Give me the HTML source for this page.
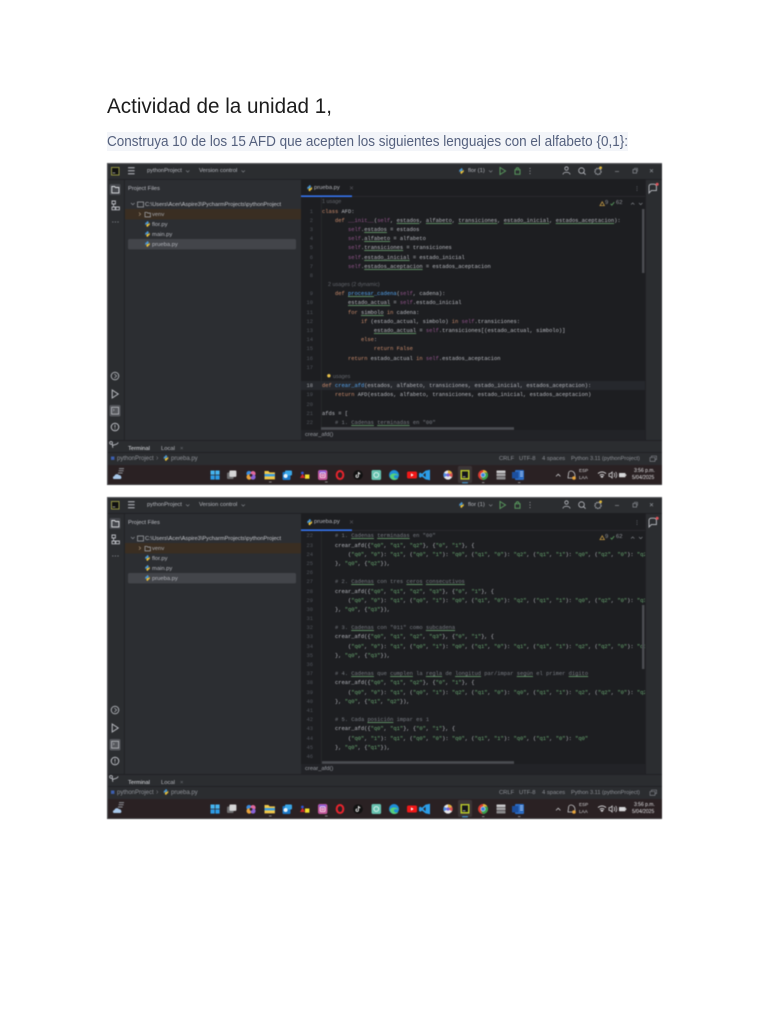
<!DOCTYPE html>
<html lang="es"><head><meta charset="utf-8"><title>Actividad de la unidad 1</title>
<style>
html,body{margin:0;padding:0;background:#fff;width:768px;height:1024px;overflow:hidden}
body{position:relative;font-family:"Liberation Sans",sans-serif}
.s{position:absolute;left:107px;width:555px;height:322px;overflow:hidden;background:#2b2d30;filter:blur(.5px)}
.s>svg{position:absolute;left:0;top:0}
.t{position:absolute;white-space:pre;line-height:8px;height:8px;font-size:5.8px;color:#b4b6bc}
.d{color:#8e9197}
.code{position:absolute;left:194px;top:34.4px;width:344px;height:232.6px;overflow:hidden;font-family:"Liberation Mono",monospace;font-size:5.417px;color:#bcbec4}
.l{position:relative;height:9.2px;line-height:9.2px;padding-left:21px;white-space:pre}
.l i{position:absolute;left:0;width:12px;text-align:right;font-style:normal;color:#4f535a}
.cur{background:#26282d}.cur i{color:#a0a3a9}
b{font-weight:normal;color:#cf8e6d}s{text-decoration:none;color:#56a8f5}em{font-style:normal;color:#94558d}
q{quotes:none;color:#6aab73}small{font-size:inherit;color:#7a7e85}kbd{font:inherit;color:#62656b;font-family:"Liberation Sans",sans-serif}
u{text-decoration-color:#5d8a62;text-underline-offset:1px}
</style></head><body>
<svg width="768" height="160" style="position:absolute;left:0;top:0;filter:blur(.3px)" xmlns="http://www.w3.org/2000/svg">
<rect x="107" y="132" width="521" height="19" fill="#f3f5f9"/>
<text x="107" y="113" font-family="Liberation Sans" font-size="21.5" fill="#1c1c1c" textLength="225" lengthAdjust="spacingAndGlyphs">Actividad de la unidad 1,</text>
<text x="107" y="146" font-family="Liberation Sans" font-size="14.5" fill="#55617e" textLength="521" lengthAdjust="spacingAndGlyphs">Construya 10 de los 15 AFD que acepten los siguientes lenguajes con el alfabeto {0,1}:</text>
</svg>

<svg width="0" height="0" style="position:absolute" xmlns="http://www.w3.org/2000/svg"><defs>
<symbol id="py" viewBox="0 0 8 8" overflow="visible"><path d="M1 3.8C1 2 2 2 3 2V.8C3 .2 5 .2 5.3.8V3.2C5.3 4 4.6 4.2 4 4.2H2.6C2 4.2 2 5 2 5.6 1.2 5.6 1 4.8 1 3.8Z" fill="#4b9ad8"/><path d="M7 4.2C7 6 6 6 5 6V7.2C5 7.8 3 7.8 2.7 7.2V5C2.7 4.4 3.4 4.2 4 4.2H5.4C6 4.2 6 3 6 2.4 6.8 2.4 7 3.2 7 4.2Z" fill="#f0c63c"/></symbol>
<symbol id="chrome" viewBox="0 0 555 322">
<rect width="555" height="322" fill="#2b2d30"/>
<rect x="194" y="16" width="344" height="261" fill="#1d1e21"/>
<rect x="17" y="16" width="177" height="261" fill="#2c2e32"/>
<rect y="16" width="555" height=".8" fill="#1e1f22"/>
<rect x="17" y="16" width=".8" height="261" fill="#1f2023"/>
<rect x="194" y="33" width="344" height=".8" fill="#2b2d30"/>
<rect x="214" y="34" width=".7" height="233" fill="#2b2d30"/>
<rect x="194" y="32.4" width="51" height="1.6" fill="#3574f0"/>
<rect x="194" y="267" width="344" height="10" fill="#222327"/>
<rect x="538" y="16" width=".8" height="261" fill="#1e1f22"/>
<rect y="277" width="555" height=".8" fill="#1e1f22"/>
<rect y="289" width="555" height=".8" fill="#1e1f22"/>
<rect x="0" y="302" width="555" height="20" fill="#2a2123"/>
<rect x="0" y="0" width="555" height="1" fill="#55575b"/>
<rect x="0" y="0" width="1" height="322" fill="#4a4c50"/>
<rect x="0" y="321" width="555" height="1" fill="#3c3a3c"/>
<!-- project rows -->
<rect x="18" y="46" width="176" height="10.4" fill="#3a2e22"/>
<rect x="21" y="76" width="168" height="10.4" rx="1.5" fill="#43454a"/>
<!-- tree icons -->
<path d="M24 40l1.8 1.8L27.6 40" fill="none" stroke="#8b8e94" stroke-width=".7"/>
<rect x="30.5" y="39" width="6" height="5" fill="none" stroke="#a8abb0" stroke-width=".7"/>
<path d="M32 49.5l1.6 1.6L32 52.7" fill="none" stroke="#a08b70" stroke-width=".7"/>
<path d="M38 49.3h2l.8.8h2.6v3.8H38Z" fill="none" stroke="#a8abb0" stroke-width=".7"/>
<use href="#py" x="37.5" y="58" width="6" height="6"/>
<use href="#py" x="37.5" y="68" width="6" height="6"/>
<use href="#py" x="37.5" y="78" width="6" height="6"/>
<use href="#py" x="199.5" y="22" width="6.4" height="6.4"/>
<path d="M243 23.4l3 3m0-3l-3 3" stroke="#55575c" stroke-width=".6"/>
<!-- top bar -->
<rect x="4" y="4" width="8.5" height="8.5" fill="#8f9040"/><rect x="5" y="5" width="6.5" height="6.5" fill="#111"/><rect x="5.6" y="9.6" width="2.6" height=".7" fill="#ccc"/>
<path d="M21 4.8h6.6M21 7.8h6.6M21 10.8h6.6" stroke="#bcbec4" stroke-width="1"/>
<path d="M79 7.4l1.7 1.7 1.7-1.7M134.5 7.4l1.7 1.7 1.7-1.7M382 7.4l1.7 1.7 1.7-1.7" fill="none" stroke="#8b8e94" stroke-width=".6"/>
<use href="#py" x="351.5" y="5" width="6" height="6"/>
<path d="M393 4.5l5.5 3.5-5.5 3.5Z" fill="none" stroke="#57965c" stroke-width="1"/>
<path d="M408 6.8h5v4.4h-5ZM409 6.6c0-2.4 3-2.4 3 0" fill="none" stroke="#57965c" stroke-width="1"/>
<path d="M423 5v.8M423 7.6v.8M423 10.2v.8" stroke="#bcbec4" stroke-width=".9"/>
<circle cx="459.5" cy="5.5" r="1.7" fill="none" stroke="#bcbec4" stroke-width=".8"/><path d="M456 11.5c0-3 7-3 7 0" fill="none" stroke="#bcbec4" stroke-width=".8"/>
<circle cx="474.5" cy="7.6" r="2.8" fill="none" stroke="#bcbec4" stroke-width=".8"/><path d="M476.6 9.7l2 2" stroke="#bcbec4" stroke-width=".8"/>
<circle cx="491" cy="8.4" r="3" fill="none" stroke="#a4a7ad" stroke-width="1.3" stroke-dasharray="1.4 .6"/><circle cx="493.6" cy="4.8" r="1.4" fill="#e0b83a"/>
<path d="M508 8.5h4" stroke="#8b8e94" stroke-width=".7"/>
<rect x="526" y="6.5" width="3.6" height="3.6" fill="none" stroke="#8b8e94" stroke-width=".7"/><path d="M527.4 6.2V5.2h3.2v3.2h-1" fill="none" stroke="#8b8e94" stroke-width=".5"/>
<path d="M543 6.2l3 3m0-3l-3 3" stroke="#8b8e94" stroke-width=".7"/>
<!-- left stripe -->
<rect x="2.5" y="21" width="11" height="11" rx="1.6" fill="#46484d"/>
<path d="M4.8 23.5h2.8l.9 1h3.4v5.4H4.8Z" fill="none" stroke="#dfe1e5" stroke-width=".9"/>
<path d="M5 38h3.4v3H5ZM5 44h3.2v2.8H5ZM8.8 44h3.6v2.8H8.8ZM6.6 41v3" fill="none" stroke="#bcbec4" stroke-width=".9"/>
<path d="M5.2 59h1.2M7.8 59H9M10.4 59h1.2" stroke="#7b7e84" stroke-width=".9"/>
<circle cx="8" cy="213" r="3.8" fill="none" stroke="#a8abb0" stroke-width="1"/><path d="M7.4 211l2.2 2-2.2 2" fill="none" stroke="#a8abb0" stroke-width=".8"/>
<path d="M5.2 227l6 4-6 4Z" fill="none" stroke="#bcbec4" stroke-width="1"/>
<rect x="2.5" y="242" width="11" height="11.5" rx="1.6" fill="#55575c"/>
<rect x="4.6" y="244.3" width="7" height="6.8" fill="none" stroke="#c4c6cb" stroke-width=".7"/><path d="M6 246l1.3 1-1.3 1" fill="none" stroke="#c4c6cb" stroke-width=".5"/>
<circle cx="8" cy="264" r="3.8" fill="none" stroke="#bcbec4" stroke-width="1"/><path d="M8 261.8v2.8M8 265.4v.8" stroke="#bcbec4" stroke-width=".8"/>
<path d="M4 278.5a1.4 1.4 0 1 0 .1 0M5.2 280.4l.6 4.4M11 279.4c0 2.4-3.4 2-5.2 3" fill="none" stroke="#bcbec4" stroke-width=".9"/>
<!-- right of editor -->
<path d="M530 23.4v.7M530 25.2v.7M530 27v.7" stroke="#7b7e84" stroke-width=".8"/>
<path d="M542 30v-6.5c0-1.6 1.2-2.3 2.6-2.3h2.2c1.4 0 2.6 .7 2.6 2.3V27.6H544.3Z" fill="none" stroke="#bcbec4" stroke-width=".9"/><circle cx="550.2" cy="21.2" r="1.5" fill="#e0535a"/>
<!-- inspection widget -->
<path d="M493 42.6l2.2-3.8 2.2 3.8Z" fill="none" stroke="#c49a45" stroke-width=".8"/>
<path d="M503.6 40.8l1.2 1.4 2.4-3" fill="none" stroke="#57965c" stroke-width=".9"/>
<path d="M524 41.6l1.7-1.7 1.7 1.7M532 40l1.7 1.7 1.7-1.7" fill="none" stroke="#8b8e94" stroke-width=".6"/>
<!-- status -->
<rect x="4" y="293.5" width="3.4" height="3.4" fill="#3c5fb0"/>
<use href="#py" x="56" y="292" width="6" height="6"/>
<path d="M49.5 293.4l1.4 1.6-1.4 1.6" fill="none" stroke="#8b8e94" stroke-width=".5"/>
<path d="M543 294.5h5v3.8h-5ZM544.5 294.4V293h5v3.6h-1.4" fill="none" stroke="#8b8e94" stroke-width=".6"/>
<!-- taskbar -->
<path d="M7 316c-1.4 0-1.6-2.6 .4-3 .4-2 3.6-2.6 4.6-.8 2.2-.6 3.6 3.8 1 3.8Z" fill="#a9c8ea"/><path d="M12 305.6h5M11.6 307.8h5M11 310h4.6" stroke="#8d9096" stroke-width="1"/>
<g>
<rect x="103.5" y="307.5" width="4.2" height="4.2" fill="#45b4f0"/><rect x="108.4" y="307.5" width="4.2" height="4.2" fill="#45b4f0"/><rect x="103.5" y="312.4" width="4.2" height="4.2" fill="#2c9be6"/><rect x="108.4" y="312.4" width="4.2" height="4.2" fill="#2c9be6"/>
<rect x="120" y="309.5" width="6.6" height="6.5" rx="1" fill="#6e6e70"/><rect x="122.4" y="307.5" width="7" height="6.4" rx="1" fill="#d5d5d6"/>
<circle cx="142" cy="310.5" r="2.6" fill="#3a8de0"/><circle cx="146" cy="310.6" r="2.6" fill="#e46a9c"/><circle cx="142.2" cy="314" r="2.7" fill="#e9a33c"/><circle cx="146" cy="314" r="2.6" fill="#8a63d8"/><circle cx="144" cy="312.3" r="1.4" fill="#2a2123"/>
<path d="M157.5 308h4l1 1.4h5.4v7H157.5Z" fill="#f2c94a"/><rect x="157.5" y="311" width="10.4" height="2.4" fill="#3a9be0"/>
<rect x="175.5" y="309" width="8" height="8" rx="1" fill="#1a78c8"/><rect x="178" y="307.5" width="7" height="5" rx="1" fill="#3aa7e8"/><circle cx="178.6" cy="313" r="2" fill="#eaf4fb"/>
<path d="M193 315l2.6-4.5 2.4 4.5Z" fill="#d62a2a"/><circle cx="195.4" cy="310" r="1.4" fill="#2c56d8"/><rect x="198" y="311.5" width="4.4" height="4.2" fill="#f5e02c"/>
<rect x="211" y="307" width="9.4" height="10" rx="2" fill="#c5589c"/><rect x="212" y="307.6" width="7" height="3" fill="#8a5ad8"/><rect x="213.2" y="309.6" width="5" height="5" rx="1.2" fill="none" stroke="#fbe8ef" stroke-width=".8"/><circle cx="215.7" cy="312" r="1" fill="none" stroke="#fbe8ef" stroke-width=".6"/>
<ellipse cx="233" cy="312" rx="3.3" ry="4" fill="none" stroke="#e8242d" stroke-width="2"/>
<circle cx="251" cy="312" r="4.8" fill="#111"/><path d="M251.4 309v4.2a1.2 1.2 0 1 1-1.2-1.2M251.4 309.2c.4 1 1 1.5 2 1.6" fill="none" stroke="#eee" stroke-width=".9"/>
<rect x="264.5" y="307" width="9.6" height="10" rx="1.6" fill="#67c2b0"/><circle cx="269.3" cy="312" r="2.4" fill="none" stroke="#d8f2ec" stroke-width="1"/>
<circle cx="287" cy="312" r="5" fill="#1f8fd8"/><path d="M283 313.5c0-3.2 6-4.4 8.6-.6-1-.8-5-1.6-4.6 1 .2 1.6 2.4 2 4.4 1.4-2 2.4-7 2.8-8.4-1.8Z" fill="#57d07a"/>
<rect x="300" y="308.5" width="10" height="7" rx="1.6" fill="#f01818"/><path d="M304 310.4l2.6 1.6-2.6 1.6Z" fill="#fff"/>
<path d="M318.6 307.6l4.4-.8v10.4l-4.4-.8-3.6-2.8-1.6 1.2-1.4-.8v-3.6l1.4-.8 1.6 1.2ZM318.6 309.8l-2.4 2.2 2.4 2.2Z" fill="#2b9de8" fill-rule="evenodd"/>
<circle cx="341" cy="312" r="4.6" fill="#e6e6ea"/><path d="M341 307.4a4.6 4.6 0 0 1 4 2.3l-4 2.3Z" fill="#e8b03a"/><path d="M345 309.7a4.6 4.6 0 0 1 0 4.6l-4-2.3Z" fill="#d9534f"/><path d="M337 314.3a4.6 4.6 0 0 1 0-4.6l4 2.3Z" fill="#4f8fe0"/><circle cx="341" cy="312" r="1.6" fill="#7c5fd8"/>
<rect x="351" y="303" width="14" height="17" rx="1.4" fill="#3b3537"/>
<rect x="353.5" y="307" width="9" height="9.6" fill="#b7c62c"/><rect x="355" y="308.4" width="6" height="6.6" fill="#14151a"/><rect x="355.8" y="313.4" width="2.6" height=".7" fill="#ddd"/><rect x="355" y="319.2" width="6" height="1" rx=".5" fill="#4aa8e8"/>
<circle cx="376" cy="312" r="5" fill="#d93b30"/><path d="M376 307a5 5 0 0 1 4.4 2.6H376Z" fill="#e6b53a"/><path d="M376 317a5 5 0 0 0 4.4-7.4H376l-2 5Z" fill="#37a24e"/><circle cx="376" cy="312" r="2.2" fill="#3b82e0" stroke="#eee" stroke-width=".6"/>
<rect x="389.5" y="307.5" width="9" height="2.6" rx=".6" fill="#c9c9cb"/><rect x="389.5" y="310.6" width="9" height="2.6" fill="#a5a5a7"/><rect x="389.5" y="313.7" width="9" height="2.8" rx=".6" fill="#8b8b8d"/>
<rect x="408" y="307" width="9" height="10" rx="1" fill="#2b6cc4"/><rect x="405" y="309" width="6.4" height="6.4" fill="#1c4f9e"/><path d="M413 309h3M413 311h3M413 313h3" stroke="#cfe2f8" stroke-width=".7"/>
<path d="M162 319h2.6M218 319h2.6M375 319.6h2.4M411 319.6h2.4" stroke="#a4a4a6" stroke-width=".7"/>
<path d="M449 313.4l2.2-2.2 2.2 2.2" fill="none" stroke="#c8c8ca" stroke-width=".8"/>
<path d="M461 315h7v-2.4c0-3-2-4.6-4-4.6-1.4 0-2.4 1-2.4 2.2Z" fill="none" stroke="#c8c8ca" stroke-width=".8"/><circle cx="467" cy="315" r="1.8" fill="#e8a53a"/>
<path d="M491 310.6c2.4-2.2 5.6-2.2 8 0M492.8 312.4c1.4-1.2 3-1.2 4.4 0M495 314.4l-1-.9c.6-.4 1.4-.4 2 0Z" fill="none" stroke="#dadadc" stroke-width=".9"/>
<path d="M502 310.6h1.4l1.8-1.6v6l-1.8-1.6H502ZM507 310c1 1 1 3 0 4M508.6 309c1.6 1.6 1.6 4.4 0 6" fill="none" stroke="#cfcfd1" stroke-width=".8"/>
<rect x="512" y="310" width="6.4" height="4.2" rx=".5" fill="#d8d8da"/><rect x="518.4" y="311.2" width=".9" height="1.8" fill="#d8d8da"/>
</g>
</symbol></defs></svg>

<!-- ============ FIRST SCREENSHOT ============ -->
<div class="s" style="top:163px">
<svg width="555" height="322"><use href="#chrome" width="555" height="322"/></svg>
<span class="t" style="left:40px;top:4px;letter-spacing:-.05px">pythonProject</span>
<span class="t" style="left:92px;top:4px">Version control</span>
<span class="t" style="left:361px;top:4px">flor (1)</span>
<span class="t" style="left:21px;top:22px;color:#bcbec4">Project Files</span>
<span class="t" style="left:38px;top:37.5px;color:#c4c6cb;font-size:5.65px">C:\Users\Acer\Aspire3\PycharmProjects\pythonProject</span>
<span class="t" style="left:45px;top:48px;color:#a8abb0">venv</span>
<span class="t" style="left:45px;top:58px">flor.py</span>
<span class="t" style="left:45px;top:68px">main.py</span>
<span class="t" style="left:45px;top:78px">prueba.py</span>
<span class="t" style="left:207px;top:21px">prueba.py</span>
<span class="t" style="left:498px;top:36px;color:#8e9197">9</span>
<span class="t" style="left:509px;top:36px;color:#8e9197">62</span>
<span class="t" style="left:198px;top:268px;color:#9a9da3">crear_afd()</span>
<span class="t" style="left:21px;top:282px;color:#dfe1e5">Terminal</span>
<span class="t" style="left:54px;top:282px">Local</span>
<span class="t" style="left:73px;top:282px;color:#6f7278">×</span>
<span class="t d" style="left:10px;top:291.5px;font-size:6px">pythonProject</span>
<span class="t d" style="left:64px;top:291.5px;font-size:6px">prueba.py</span>
<span class="t d" style="left:392px;top:291.5px">CRLF</span>
<span class="t d" style="left:412px;top:291.5px">UTF-8</span>
<span class="t d" style="left:435px;top:291.5px">4 spaces</span>
<span class="t d" style="left:464px;top:291.5px;font-size:5.6px">Python 3.11 (pythonProject)</span>
<span class="t" style="left:472px;top:303.5px;font-size:4.6px;color:#d5d5d7">ESP</span>
<span class="t" style="left:472px;top:310.5px;font-size:4.6px;color:#d5d5d7">LAA</span>
<span class="t" style="left:527px;top:303.5px;font-size:5px;color:#e0e0e2">3:56 p.m.</span>
<span class="t" style="left:525px;top:310.5px;font-size:5px;color:#e0e0e2">5/04/2025</span>
<div class="code">
<div class="l"><kbd>1 usage</kbd></div>
<div class="l"><i>1</i><b>class</b> AFD:</div>
<div class="l"><i>2</i>    <b>def</b> <em>__init__</em>(<em>self</em>, <u>estados</u>, <u>alfabeto</u>, <u>transiciones</u>, <u>estado_inicial</u>, <u>estados_aceptacion</u>):</div>
<div class="l"><i>3</i>        <em>self</em>.<u>estados</u> = estados</div>
<div class="l"><i>4</i>        <em>self</em>.<u>alfabeto</u> = alfabeto</div>
<div class="l"><i>5</i>        <em>self</em>.<u>transiciones</u> = transiciones</div>
<div class="l"><i>6</i>        <em>self</em>.<u>estado_inicial</u> = estado_inicial</div>
<div class="l"><i>7</i>        <em>self</em>.<u>estados_aceptacion</u> = estados_aceptacion</div>
<div class="l"><i>8</i></div>
<div class="l"><kbd>    2 usages (2 dynamic)</kbd></div>
<div class="l"><i>9</i>    <b>def</b> <s><u>procesar</u>_cadena</s>(<em>self</em>, cadena):</div>
<div class="l"><i>10</i>        <u>estado_actual</u> = <em>self</em>.estado_inicial</div>
<div class="l"><i>11</i>        <b>for</b> <u>simbolo</u> <b>in</b> cadena:</div>
<div class="l"><i>12</i>            <b>if</b> (estado_actual, simbolo) <b>in</b> <em>self</em>.transiciones:</div>
<div class="l"><i>13</i>                <u>estado_actual</u> = <em>self</em>.transiciones[(estado_actual, simbolo)]</div>
<div class="l"><i>14</i>            <b>else</b>:</div>
<div class="l"><i>15</i>                <b>return False</b></div>
<div class="l"><i>16</i>        <b>return</b> estado_actual <b>in</b> <em>self</em>.estados_aceptacion</div>
<div class="l"><i>17</i></div>
<div class="l"><kbd>   <span style="color:#e8c14a;font-size:8px;line-height:8px">●</span> usages</kbd></div>
<div class="l cur"><i>18</i><b>def</b> <s>crear_afd</s>(estados, alfabeto, transiciones, estado_inicial, estados_aceptacion):</div>
<div class="l"><i>19</i>    <b>return</b> AFD(estados, alfabeto, transiciones, estado_inicial, estados_aceptacion)</div>
<div class="l"><i>20</i></div>
<div class="l"><i>21</i>afds = [</div>
<div class="l"><i>22</i>    <small># 1. <u>Cadenas</u> <u>terminadas</u> en "00"</small></div>
</div>
<svg width="555" height="322"><rect x="535" y="46" width="2.4" height="64" fill="#4b4d52"/><rect x="214" y="264.2" width="193" height="2.6" fill="#4b4d52"/></svg>
</div>

<!-- ============ SECOND SCREENSHOT ============ -->
<div class="s" style="top:497px">
<svg width="555" height="322"><use href="#chrome" width="555" height="322"/></svg>
<span class="t" style="left:40px;top:4px;letter-spacing:-.05px">pythonProject</span>
<span class="t" style="left:92px;top:4px">Version control</span>
<span class="t" style="left:361px;top:4px">flor (1)</span>
<span class="t" style="left:21px;top:22px;color:#bcbec4">Project Files</span>
<span class="t" style="left:38px;top:37.5px;color:#c4c6cb;font-size:5.65px">C:\Users\Acer\Aspire3\PycharmProjects\pythonProject</span>
<span class="t" style="left:45px;top:48px;color:#a8abb0">venv</span>
<span class="t" style="left:45px;top:58px">flor.py</span>
<span class="t" style="left:45px;top:68px">main.py</span>
<span class="t" style="left:45px;top:78px">prueba.py</span>
<span class="t" style="left:207px;top:21px">prueba.py</span>
<span class="t" style="left:498px;top:36px;color:#8e9197">9</span>
<span class="t" style="left:509px;top:36px;color:#8e9197">62</span>
<span class="t" style="left:198px;top:268px;color:#9a9da3">crear_afd()</span>
<span class="t" style="left:21px;top:282px;color:#dfe1e5">Terminal</span>
<span class="t" style="left:54px;top:282px">Local</span>
<span class="t" style="left:73px;top:282px;color:#6f7278">×</span>
<span class="t d" style="left:10px;top:291.5px;font-size:6px">pythonProject</span>
<span class="t d" style="left:64px;top:291.5px;font-size:6px">prueba.py</span>
<span class="t d" style="left:392px;top:291.5px">CRLF</span>
<span class="t d" style="left:412px;top:291.5px">UTF-8</span>
<span class="t d" style="left:435px;top:291.5px">4 spaces</span>
<span class="t d" style="left:464px;top:291.5px;font-size:5.6px">Python 3.11 (pythonProject)</span>
<span class="t" style="left:472px;top:303.5px;font-size:4.6px;color:#d5d5d7">ESP</span>
<span class="t" style="left:472px;top:310.5px;font-size:4.6px;color:#d5d5d7">LAA</span>
<span class="t" style="left:527px;top:303.5px;font-size:5px;color:#e0e0e2">3:56 p.m.</span>
<span class="t" style="left:525px;top:310.5px;font-size:5px;color:#e0e0e2">5/04/2025</span>
<div class="code">
<div class="l"><i>22</i>    <small># 1. <u>Cadenas</u> <u>terminadas</u> en "00"</small></div>
<div class="l"><i>23</i>    crear_afd({<q>"q0"</q>, <q>"q1"</q>, <q>"q2"</q>}, {<q>"0"</q>, <q>"1"</q>}, {</div>
<div class="l"><i>24</i>        (<q>"q0"</q>, <q>"0"</q>): <q>"q1"</q>, (<q>"q0"</q>, <q>"1"</q>): <q>"q0"</q>, (<q>"q1"</q>, <q>"0"</q>): <q>"q2"</q>, (<q>"q1"</q>, <q>"1"</q>): <q>"q0"</q>, (<q>"q2"</q>, <q>"0"</q>): <q>"q2"</q>, (<q>"q2"</q>, <q>"1"</q>): <q>"q0"</q></div>
<div class="l"><i>25</i>    }, <q>"q0"</q>, {<q>"q2"</q>}),</div>
<div class="l"><i>26</i></div>
<div class="l"><i>27</i>    <small># 2. <u>Cadenas</u> con tres <u>ceros</u> <u>consecutivos</u></small></div>
<div class="l"><i>28</i>    crear_afd({<q>"q0"</q>, <q>"q1"</q>, <q>"q2"</q>, <q>"q3"</q>}, {<q>"0"</q>, <q>"1"</q>}, {</div>
<div class="l"><i>29</i>        (<q>"q0"</q>, <q>"0"</q>): <q>"q1"</q>, (<q>"q0"</q>, <q>"1"</q>): <q>"q0"</q>, (<q>"q1"</q>, <q>"0"</q>): <q>"q2"</q>, (<q>"q1"</q>, <q>"1"</q>): <q>"q0"</q>, (<q>"q2"</q>, <q>"0"</q>): <q>"q3"</q>, (<q>"q2"</q>, <q>"1"</q>): <q>"q0"</q></div>
<div class="l"><i>30</i>    }, <q>"q0"</q>, {<q>"q3"</q>}),</div>
<div class="l"><i>31</i></div>
<div class="l"><i>32</i>    <small># 3. <u>Cadenas</u> con "011" como <u>subcadena</u></small></div>
<div class="l"><i>33</i>    crear_afd({<q>"q0"</q>, <q>"q1"</q>, <q>"q2"</q>, <q>"q3"</q>}, {<q>"0"</q>, <q>"1"</q>}, {</div>
<div class="l"><i>34</i>        (<q>"q0"</q>, <q>"0"</q>): <q>"q1"</q>, (<q>"q0"</q>, <q>"1"</q>): <q>"q0"</q>, (<q>"q1"</q>, <q>"0"</q>): <q>"q1"</q>, (<q>"q1"</q>, <q>"1"</q>): <q>"q2"</q>, (<q>"q2"</q>, <q>"0"</q>): <q>"q1"</q>, (<q>"q2"</q>, <q>"1"</q>): <q>"q3"</q></div>
<div class="l"><i>35</i>    }, <q>"q0"</q>, {<q>"q3"</q>}),</div>
<div class="l"><i>36</i></div>
<div class="l"><i>37</i>    <small># 4. <u>Cadenas</u> que <u>cumplen</u> la <u>regla</u> de <u>longitud</u> par/impar <u>según</u> el primer <u>dígito</u></small></div>
<div class="l"><i>38</i>    crear_afd({<q>"q0"</q>, <q>"q1"</q>, <q>"q2"</q>}, {<q>"0"</q>, <q>"1"</q>}, {</div>
<div class="l"><i>39</i>        (<q>"q0"</q>, <q>"0"</q>): <q>"q1"</q>, (<q>"q0"</q>, <q>"1"</q>): <q>"q2"</q>, (<q>"q1"</q>, <q>"0"</q>): <q>"q0"</q>, (<q>"q1"</q>, <q>"1"</q>): <q>"q2"</q>, (<q>"q2"</q>, <q>"0"</q>): <q>"q2"</q>, (<q>"q2"</q>, <q>"1"</q>): <q>"q1"</q></div>
<div class="l"><i>40</i>    }, <q>"q0"</q>, {<q>"q1"</q>, <q>"q2"</q>}),</div>
<div class="l"><i>41</i></div>
<div class="l"><i>42</i>    <small># 5. Cada <u>posición</u> impar es 1</small></div>
<div class="l"><i>43</i>    crear_afd({<q>"q0"</q>, <q>"q1"</q>}, {<q>"0"</q>, <q>"1"</q>}, {</div>
<div class="l"><i>44</i>        (<q>"q0"</q>, <q>"1"</q>): <q>"q1"</q>, (<q>"q0"</q>, <q>"0"</q>): <q>"q0"</q>, (<q>"q1"</q>, <q>"1"</q>): <q>"q0"</q>, (<q>"q1"</q>, <q>"0"</q>): <q>"q0"</q></div>
<div class="l"><i>45</i>    }, <q>"q0"</q>, {<q>"q1"</q>}),</div>
<div class="l"><i>46</i></div>
</div>
<svg width="555" height="322"><rect x="535" y="108" width="2.4" height="64" fill="#4b4d52"/><rect x="215" y="264.2" width="192" height="2.6" fill="#4b4d52"/></svg>
</div>
</body></html>
